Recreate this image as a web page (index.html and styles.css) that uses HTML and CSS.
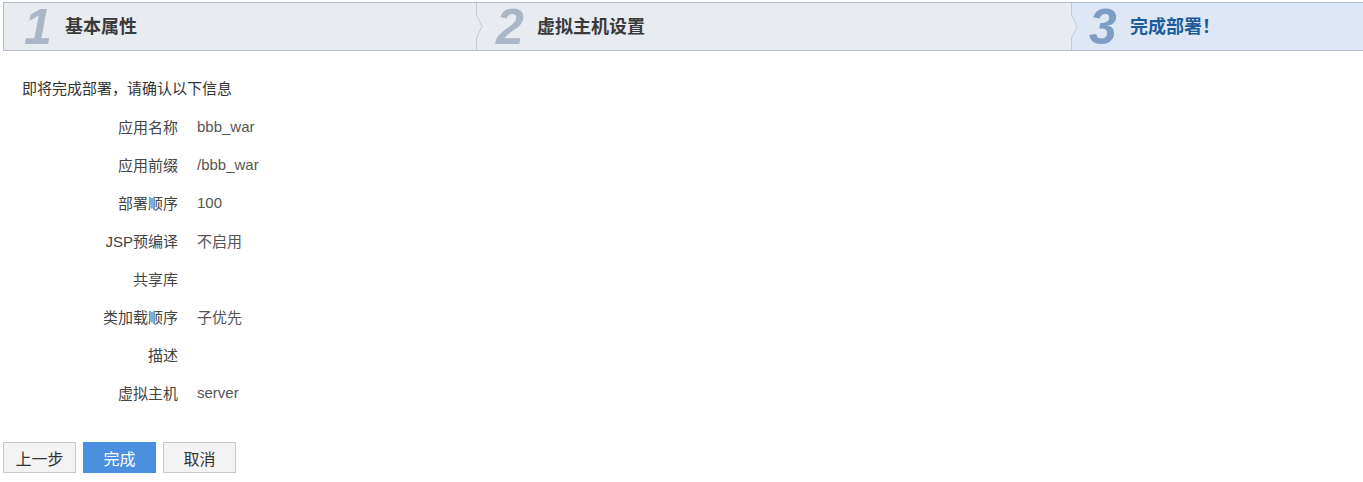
FILE: index.html
```html
<!DOCTYPE html>
<html lang="zh-CN">
<head>
<meta charset="utf-8">
<title>部署</title>
<link rel="stylesheet" href="styles.css">
</head>
<body>
<div class="page">
  <div class="steps">
    <div class="step step-1">
      <span class="num">1</span><span class="label">基本属性</span>
    </div>
    <svg class="sep" width="8" height="47" viewBox="0 0 8 47">
      <rect x="0" y="0" width="8" height="47" fill="#e8ebf0"/>
      <polygon points="0,0 1,0 1,12 6.5,23.5 1,35 1,47 0,47" fill="#e8ebf0"/>
      <polyline points="0.5,0 0.5,12 6,23.5 0.5,35 0.5,47" fill="none" stroke="#c3c9d2" stroke-width="1"/>
    </svg>
    <div class="step step-2">
      <span class="num">2</span><span class="label">虚拟主机设置</span>
    </div>
    <svg class="sep" width="8" height="47" viewBox="0 0 8 47">
      <rect x="0" y="0" width="8" height="47" fill="#dde7f6"/>
      <polygon points="0,0 1,0 1,12 6.5,23.5 1,35 1,47 0,47" fill="#e8ebf0"/>
      <polyline points="0.5,0 0.5,12 6,23.5 0.5,35 0.5,47" fill="none" stroke="#c3c9d2" stroke-width="1"/>
    </svg>
    <div class="step step-3 active">
      <span class="num">3</span><span class="label">完成部署！</span>
    </div>
  </div>

  <div class="content">
    <p class="intro">即将完成部署，请确认以下信息</p>
    <div class="info">
      <div class="k">应用名称</div><div class="v">bbb_war</div>
      <div class="k">应用前缀</div><div class="v">/bbb_war</div>
      <div class="k">部署顺序</div><div class="v">100</div>
      <div class="k">JSP预编译</div><div class="v">不启用</div>
      <div class="k">共享库</div><div class="v"></div>
      <div class="k">类加载顺序</div><div class="v">子优先</div>
      <div class="k">描述</div><div class="v"></div>
      <div class="k">虚拟主机</div><div class="v">server</div>
    </div>
  </div>

  <div class="actions">
    <button class="btn">上一步</button>
    <button class="btn primary">完成</button>
    <button class="btn">取消</button>
  </div>
</div>
</body>
</html>
```

FILE: styles.css
```css
html, body {
  margin: 0;
  padding: 0;
  background: #ffffff;
}

body {
  font-family: "Liberation Sans", "Noto Sans CJK SC", Arial, sans-serif;
  color: #333333;
}

.page {
  padding: 2px 0 0 3px;
}

.steps {
  display: flex;
  height: 47px;
  border-top: 1px solid #b5bdc8;
  border-bottom: 1px solid #b5bdc8;
  border-left: 1px solid #b5bdc8;
  background: #e8ebf0;
}

.step {
  display: flex;
  align-items: center;
  height: 47px;
  box-sizing: border-box;
}

.step-1 {
  width: 472px;
  padding-left: 20px;
}

.step-2 {
  width: 587px;
  padding-left: 12px;
}

.step-3 {
  flex: 1;
  padding-left: 10px;
  background: #dde7f6;
}

.sep {
  display: block;
  flex: 0 0 8px;
}

.num {
  font-family: "Liberation Sans", Arial, sans-serif;
  font-size: 50px;
  font-weight: bold;
  font-style: italic;
  color: #aab6c6;
  line-height: 47px;
  width: 24px;
  margin-right: 17px;
  position: relative;
  top: 1px;
}

.label {
  font-family: "Noto Sans CJK SC", "Liberation Sans", sans-serif;
  font-size: 18px;
  font-weight: bold;
  color: #3a3a3a;
  margin-bottom: 4px;
}

.step-3 .num {
  color: #7d9dc5;
}

.step-3 .label {
  color: #1d5c9c;
}

.content {
  padding-top: 20px;
}

.intro {
  margin: 0;
  padding-left: 19px;
  font-size: 15px;
  line-height: 36px;
  color: #333333;
}

.info {
  display: grid;
  grid-template-columns: 175px auto;
  column-gap: 19px;
  grid-auto-rows: 38px;
  align-items: center;
  font-size: 15px;
}

.k {
  text-align: right;
  color: #444444;
}

.v {
  color: #555555;
}

.actions {
  display: flex;
  gap: 7px;
  margin-top: 31px;
}

.btn {
  width: 73px;
  height: 31px;
  padding: 0;
  font-family: "Noto Sans CJK SC", "Liberation Sans", sans-serif;
  font-size: 16px;
  color: #333333;
  background: #f3f3f3;
  border: 1px solid #c9c9c9;
  border-radius: 0;
}

.btn.primary {
  background: #4a8fe0;
  border-color: #4a8fe0;
  color: #ffffff;
}
```
